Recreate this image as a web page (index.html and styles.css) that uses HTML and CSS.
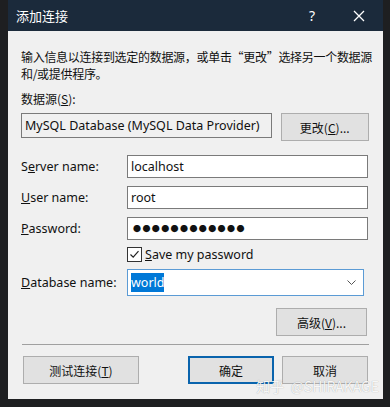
FILE: index.html
```html
<!DOCTYPE html>
<html lang="zh-CN">
<head>
    <meta charset="UTF-8">
    <title>添加连接</title>
    <link rel="stylesheet" href="styles.css">
</head>
<body>
    <div class="dialog">
        <div class="titlebar">
            <span class="title">添加连接</span>
            <span class="help">?</span>
            <svg class="close" width="12" height="12" viewBox="0 0 12 12"><path d="M1 1L11 11M11 1L1 11" stroke="#fff" stroke-width="1.3"/></svg>
        </div>
        <div class="content">
            <p class="intro">输入信息以连接到选定的数据源，或单击“更改”选择另一个数据源和/或提供程序。</p>
            <div class="label-top">数据源(<u>S</u>):</div>
            <div class="source-row">
                <div class="source-box">MySQL Database (MySQL Data Provider)</div>
                <div class="btn btn-change">更改(<u>C</u>)...</div>
            </div>
            <div class="form">
                <div class="field-label">S<u>e</u>rver name:</div>
                <div class="input">localhost</div>
                <div class="field-label"><u>U</u>ser name:</div>
                <div class="input">root</div>
                <div class="field-label"><u>P</u>assword:</div>
                <div class="input dots">●●●●●●●●●●●●</div>
                <div></div>
                <div class="check-row">
                    <span class="checkbox"><svg width="13" height="13" viewBox="0 0 13 13"><path d="M2.5 6.5L5.2 9.2L10.5 3.2" stroke="#222" stroke-width="1.2" fill="none"/></svg></span>
                    <span><u>S</u>ave my password</span>
                </div>
                <div class="field-label"><u>D</u>atabase name:</div>
                <div class="combo">
                    <span class="selected">world</span>
                    <svg class="chevron" width="9" height="6" viewBox="0 0 9 6"><path d="M0.5 0.5L4.5 4.5L8.5 0.5" stroke="#555" fill="none"/></svg>
                </div>
            </div>
            <div class="adv-row">
                <div class="btn btn-adv">高级(<u>V</u>)...</div>
            </div>
            <div class="separator"></div>
            <div class="footer">
                <div class="btn btn-test">测试连接(<u>T</u>)</div>
                <div class="btn btn-ok">确定</div>
                <div class="btn btn-cancel">取消</div>
            </div>
            <div class="watermark">知乎&nbsp; @SHIRAKAGE</div>
        </div>
    </div>
</body>
</html>
```

FILE: styles.css
```css
body {
    margin: 0;
    background-color: #1e1f21;
    font-family: "Noto Sans", "Noto Sans CJK SC", sans-serif;
    font-size: 12.5px;
    color: #111;
}
.dialog {
    width: 375px;
    margin-left: 8px;
    height: 399px;
    display: flex;
    flex-direction: column;
}
.titlebar {
    height: 31px;
    background: #1b2a3b;
    color: #fff;
    display: flex;
    align-items: center;
    padding-left: 8px;
    font-family: "Noto Sans CJK SC", sans-serif;
    font-size: 13px;
}
.title {
    flex: 1;
}
.help {
    font-family: "Noto Sans", sans-serif;
    font-size: 14px;
    margin-right: 38px;
}
.close {
    margin-right: 18px;
}
.content {
    flex: 1;
    background: #f0f0f0;
    padding: 0 14px 0 13px;
    position: relative;
}
.intro {
    margin: 17px -4px 0 0;
    font-family: "Noto Sans CJK SC", sans-serif;
    font-size: 12px;
    letter-spacing: -0.3px;
    line-height: 17px;
}
.label-top {
    margin-top: 9px;
    font-family: "Noto Sans CJK SC", sans-serif;
    font-size: 12px;
    line-height: 16px;
}
.source-row {
    display: flex;
    margin-top: 6px;
    gap: 9px;
}
.source-box {
    width: 247px;
    height: 23px;
    border: 1px solid #7a7a7a;
    line-height: 23px;
    padding-left: 3px;
    box-sizing: content-box;
    white-space: nowrap;
}
.btn {
    background: #e1e1e1;
    border: 1px solid #adadad;
    display: flex;
    align-items: center;
    justify-content: center;
    font-family: "Noto Sans CJK SC", sans-serif;
    font-size: 12px;
    box-sizing: border-box;
}
.btn-change {
    width: 89px;
    height: 28px;
}
.form {
    display: grid;
    grid-template-columns: 106px 241px;
    row-gap: 8px;
    margin-top: 14px;
    align-items: center;
}
.field-label {
    line-height: 16px;
}
.input {
    height: 23px;
    border: 1px solid #7a7a7a;
    background: #fff;
    line-height: 21px;
    padding-left: 3px;
    box-sizing: border-box;
}
.dots {
    font-size: 8px;
    letter-spacing: 1.4px;
    padding-left: 5px;
}
.check-row {
    display: flex;
    align-items: center;
    gap: 3px;
    height: 14px;
    margin-top: -1px;
}
.checkbox {
    width: 13px;
    height: 13px;
    border: 1px solid #333;
    background: #fff;
    display: flex;
}
.combo {
    width: 237px;
    height: 27px;
    border: 1px solid #5b9bd5;
    background: #fff;
    box-sizing: border-box;
    display: flex;
    align-items: center;
    padding-left: 3px;
}
.selected {
    background: #0078d7;
    color: #fff;
    line-height: 19px;
    flex: none;
}
.chevron {
    margin-left: auto;
    margin-right: 7px;
}
.adv-row {
    display: flex;
    justify-content: flex-end;
    margin-top: 12px;
    padding-right: 2px;
}
.btn-adv {
    width: 91px;
    height: 28px;
}
.separator {
    height: 1px;
    background: #a0a0a0;
    margin: 8px 0 0 1px;
}
.footer {
    display: flex;
    margin-top: 11px;
    padding-left: 2px;
}
.btn-test {
    width: 116px;
    height: 28px;
}
.btn-ok {
    width: 86px;
    height: 28px;
    margin-left: 49px;
    border: 2px solid #0a64ad;
}
.btn-cancel {
    width: 86px;
    height: 28px;
    margin-left: 8px;
}
.watermark {
    position: absolute;
    right: 4px;
    bottom: 5px;
    font-family: "Noto Sans CJK SC", sans-serif;
    font-size: 14px;
    line-height: 16px;
    color: rgba(255, 255, 255, 0.92);
    text-shadow: 0 0 1px rgba(0, 0, 0, 0.35);
}
```
